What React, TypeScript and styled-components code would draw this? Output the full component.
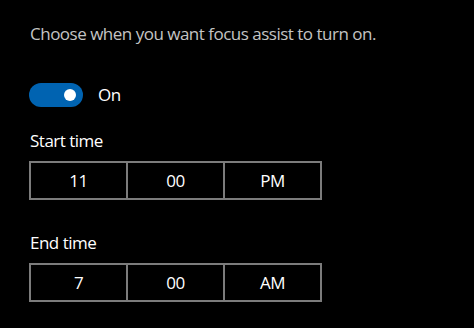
import React, { useState } from 'react'
import styled, { createGlobalStyle } from 'styled-components'

const GlobalStyle = createGlobalStyle`
  html, body {
    margin: 0;
    padding: 0;
    background: #000;
  }
  body {
    font-family: 'Open Sans', 'Noto Sans', sans-serif;
    letter-spacing: -0.5px;
  }
`

interface TimeValue {
  hour: string
  minute: string
  period: string
}

const Toggle: React.FC<{ on: boolean; onChange: (v: boolean) => void }> = ({ on, onChange }) => {
  return (
    <StyledToggleRow>
      <StyledSwitch on={on} onClick={() => onChange(!on)}>
        <StyledKnob on={on} />
      </StyledSwitch>
      <StyledToggleLabel>{on ? 'On' : 'Off'}</StyledToggleLabel>
    </StyledToggleRow>
  )
}

const TimePicker: React.FC<{ label: string; value: TimeValue; gap: number }> = ({ label, value, gap }) => {
  return (
    <StyledField gap={gap}>
      <StyledFieldLabel>{label}</StyledFieldLabel>
      <StyledPicker>
        <StyledCell>{value.hour}</StyledCell>
        <StyledCell>{value.minute}</StyledCell>
        <StyledCell>{value.period}</StyledCell>
      </StyledPicker>
    </StyledField>
  )
}

const App: React.FC = () => {
  const [on, setOn] = useState(true)

  return (
    <>
      <GlobalStyle />
      <StyledPage>
        <StyledDescription>Choose when you want focus assist to turn on.</StyledDescription>
        <Toggle on={on} onChange={setOn} />
        <TimePicker label="Start time" value={{ hour: '11', minute: '00', period: 'PM' }} gap={21.5} />
        <TimePicker label="End time" value={{ hour: '7', minute: '00', period: 'AM' }} gap={31} />
      </StyledPage>
    </>
  )
}

const StyledPage = styled.div`
  display: flex;
  flex-direction: column;
  align-items: flex-start;
  padding: 22px 29px;
  height: 328px;
  box-sizing: border-box;
  background: #000;
`

const StyledDescription = styled.div`
  color: #c4c4c4;
  font-size: 17px;
  line-height: 24px;
  padding-left: 1px;
`

const StyledToggleRow = styled.div`
  display: flex;
  align-items: center;
  gap: 15px;
  margin-top: 37px;
`

const StyledSwitch = styled.div<{ on: boolean }>`
  display: flex;
  align-items: center;
  justify-content: ${(props) => (props.on ? 'flex-end' : 'flex-start')};
  width: 54px;
  height: 24px;
  box-sizing: border-box;
  padding: 0 7px;
  border-radius: 12px;
  background: ${(props) => (props.on ? '#0063b1' : 'transparent')};
  border: ${(props) => (props.on ? 'none' : '2px solid #fff')};
  cursor: pointer;
`

const StyledKnob = styled.div<{ on: boolean }>`
  width: 12px;
  height: 12px;
  border-radius: 50%;
  background: #fff;
`

const StyledToggleLabel = styled.span`
  color: #fff;
  font-size: 17px;
  line-height: 24px;
`

const StyledField = styled.div<{ gap: number }>`
  display: flex;
  flex-direction: column;
  margin-top: ${(props) => props.gap}px;
`

const StyledFieldLabel = styled.div`
  color: #fff;
  font-size: 17px;
  line-height: 24px;
  padding-left: 1px;
  margin-bottom: 8px;
`

const StyledPicker = styled.div`
  display: grid;
  grid-template-columns: 95px 95px 95px;
  column-gap: 2px;
  width: 293px;
  height: 39px;
  box-sizing: border-box;
  border: 2px solid #7c7c7c;
  background: #7c7c7c;
`

const StyledCell = styled.div`
  display: flex;
  align-items: center;
  justify-content: center;
  background: #000;
  color: #fff;
  font-size: 17px;
`

export default App
